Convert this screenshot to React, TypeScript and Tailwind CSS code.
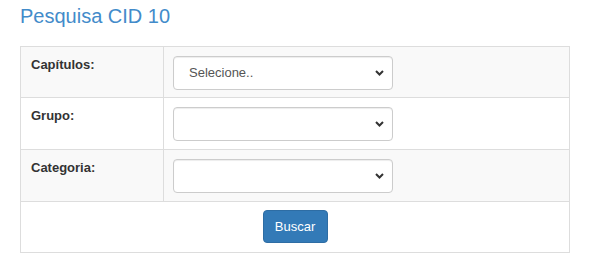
const Chevron = () => (
    <svg
        className="pointer-events-none absolute right-[9px] top-1/2 -translate-y-1/2"
        width="9"
        height="6"
        viewBox="0 0 9 6"
    >
        <path d="M1 1 L4.5 4.5 L8 1" fill="none" stroke="#333" strokeWidth="2" />
    </svg>
);

const SelectBox = ({ placeholder }: { placeholder?: string }) => (
    <div className="relative w-[220px]">
        <select
            defaultValue=""
            className="h-[34px] w-full appearance-none rounded-[4px] border border-[#ccc] bg-white pl-[15px] pr-6 text-[13px] text-[#555] shadow-[inset_0_1px_1px_rgba(0,0,0,0.075)] outline-none"
        >
            <option value="">{placeholder ?? ""}</option>
        </select>
        <Chevron />
    </div>
);

const rows = [
    { label: "Capítulos:", placeholder: "Selecione..", striped: true, pad: "pb-[7px]" },
    { label: "Grupo:", placeholder: "", striped: false, pad: "pb-[8px]" },
    { label: "Categoria:", placeholder: "", striped: true, pad: "pb-[8px]" },
];

export default function App() {
    return (
        <div
            className="min-h-[269px] bg-white px-5 pt-[5px] text-[13px] text-[#333]"
            style={{ fontFamily: '"Liberation Sans", Arial, sans-serif' }}
        >
            <h3 className="text-[20px] leading-[22px] text-[#428bca]">Pesquisa CID 10</h3>
            <div className="mt-[19px] w-[550px] border border-[#ddd]">
                {rows.map((row) => (
                    <div
                        key={row.label}
                        className={`grid grid-cols-[143px_1fr] border-b border-[#ddd] ${
                            row.striped ? "bg-[#f9f9f9]" : "bg-white"
                        }`}
                    >
                        <div className="border-r border-[#ddd] px-[10px] pt-[8px] font-bold leading-[19px]">
                            {row.label}
                        </div>
                        <div className={`pl-[9px] pt-[9px] ${row.pad}`}>
                            <SelectBox placeholder={row.placeholder} />
                        </div>
                    </div>
                ))}
                <div className="flex h-[50px] justify-center pt-[8px]">
                    <button className="h-[33px] w-[65px] rounded-[4px] border border-[#2e6da4] bg-[#337ab7] text-[13px] text-white">
                        Buscar
                    </button>
                </div>
            </div>
        </div>
    );
}
